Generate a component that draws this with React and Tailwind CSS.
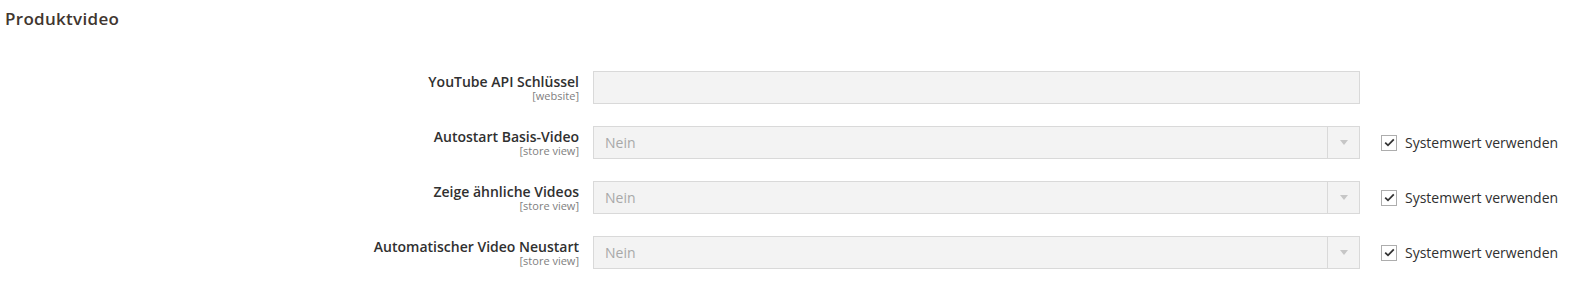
import React from "react";

function Check() {
  return (
    <span className="flex h-[16px] w-[16px] items-center justify-center border border-[#adadad] bg-white">
      <svg width="11" height="9" viewBox="0 0 11 9" fill="none">
        <path d="M1.2 4.6 L4 7.3 L9.8 1.4" stroke="#333" strokeWidth="1.8" />
      </svg>
    </span>
  );
}

function Label({ title, scope }) {
  return (
    <div className="w-[579px] shrink-0 pt-[1px] text-right">
      <div className="text-[14px] font-semibold leading-[19px] text-[#303030]">{title}</div>
      <div className="-mt-[2px] text-[11px] leading-[13px] text-[#808080]">{scope}</div>
    </div>
  );
}

function SelectRow({ title, scope }) {
  return (
    <div className="flex items-start">
      <Label title={title} scope={scope} />
      <div className="ml-[14px] flex h-[33px] w-[767px] shrink-0 border border-[#d9d9d9] bg-[#f3f3f3]">
        <div className="flex flex-1 items-center pl-[11px] text-[14px] text-[#a8a8a8]">Nein</div>
        <div className="flex w-[32px] items-center justify-center border-l border-[#d9d9d9]">
          <svg width="8" height="5" viewBox="0 0 8 5">
            <path d="M0 0 H8 L4 5 Z" fill="#c6c6c6" />
          </svg>
        </div>
      </div>
      <div className="ml-[21px] flex h-[33px] items-center gap-[8px]">
        <Check />
        <span className="text-[14px] text-[#303030]">Systemwert verwenden</span>
      </div>
    </div>
  );
}

export default function App() {
  return (
    <div className="h-[286px] w-[1590px] bg-white" style={{ fontFamily: '"Open Sans", sans-serif' }}>
      <div className="pl-[5px] pt-[8px] text-[17px] font-semibold leading-[22px] tracking-[0.3px] text-[#41362f]">
        Produktvideo
      </div>
      <div className="mt-[41px] flex flex-col gap-[22px]">
        <div className="flex items-start">
          <Label title="YouTube API Schlüssel" scope="[website]" />
          <div className="ml-[14px] h-[33px] w-[767px] shrink-0 border border-[#d9d9d9] bg-[#f3f3f3]" />
        </div>
        <SelectRow title="Autostart Basis-Video" scope="[store view]" />
        <SelectRow title="Zeige ähnliche Videos" scope="[store view]" />
        <SelectRow title="Automatischer Video Neustart" scope="[store view]" />
      </div>
    </div>
  );
}
